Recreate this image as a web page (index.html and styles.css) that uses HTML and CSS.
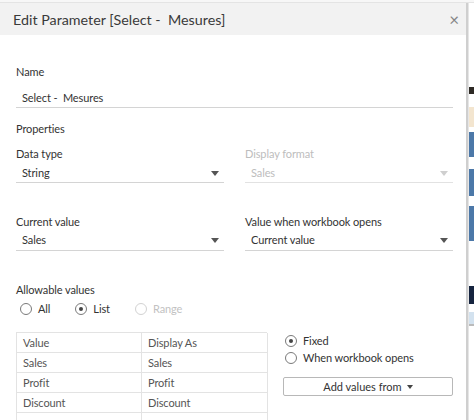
FILE: index.html
```html
<!DOCTYPE html>
<html lang="en">
<head>
  <meta charset="UTF-8">
  <title>Edit Parameter</title>
  <link rel="stylesheet" href="styles.css">
</head>
<body>
  <div class="toolbar-edge"></div>

  <div class="stage">
    <div class="dialog">
      <div class="dialog-header">
        <span class="dialog-title">Edit Parameter [Select -&nbsp; Mesures]</span>
        <span class="dialog-close">&times;</span>
      </div>

      <div class="dialog-body">
        <div class="label name-label">Name</div>
        <div class="text-field">Select -&nbsp; Mesures</div>

        <div class="label section-title">Properties</div>

        <div class="prop-grid">
          <div class="prop">
            <div class="label">Data type</div>
            <div class="dropdown">String<span class="caret"></span></div>
          </div>
          <div class="prop disabled">
            <div class="label">Display format</div>
            <div class="dropdown">Sales<span class="caret"></span></div>
          </div>
          <div class="prop second-row">
            <div class="label">Current value</div>
            <div class="dropdown">Sales<span class="caret"></span></div>
          </div>
          <div class="prop second-row">
            <div class="label">Value when workbook opens</div>
            <div class="dropdown">Current value<span class="caret"></span></div>
          </div>
        </div>

        <div class="label allowable-label">Allowable values</div>
        <div class="radio-row">
          <label class="radio"><span class="dot"></span>All</label>
          <label class="radio checked"><span class="dot"></span>List</label>
          <label class="radio disabled"><span class="dot"></span>Range</label>
        </div>

        <div class="list-area">
          <div class="value-table">
            <div class="cell">Value</div><div class="cell">Display As</div>
            <div class="cell">Sales</div><div class="cell">Sales</div>
            <div class="cell">Profit</div><div class="cell">Profit</div>
            <div class="cell">Discount</div><div class="cell">Discount</div>
            <div class="cell add-row">Click to add</div><div class="cell"></div>
          </div>

          <div class="list-options">
            <label class="radio checked"><span class="dot"></span>Fixed</label>
            <label class="radio"><span class="dot"></span>When workbook opens</label>
            <button class="add-btn">Add values from <span class="btn-caret"></span></button>
          </div>
        </div>
      </div>
    </div>

    <!-- sliver of the worksheet behind the dialog -->
    <div class="backdrop">
      <div class="bd bd-gap1"></div>
      <div class="bd bd-dark"></div>
      <div class="bd bd-gap2"></div>
      <div class="bd bd-beige"></div>
      <div class="bd bd-gap3"></div>
      <div class="bd bd-blue b1"></div>
      <div class="bd bd-gap4"></div>
      <div class="bd bd-blue b2"></div>
      <div class="bd bd-gap5"></div>
      <div class="bd bd-blue b3"></div>
      <div class="bd bd-gap6"></div>
      <div class="bd bd-navy"></div>
      <div class="bd bd-gap7"></div>
      <div class="bd bd-light"></div>
    </div>
  </div>
</body>
</html>
```

FILE: styles.css
```css
* {
  box-sizing: border-box;
  margin: 0;
  padding: 0;
}

body {
  font-family: 'Lato', 'Open Sans', sans-serif;
  background: #ffffff;
  color: #333;
  font-size: 11px;
  letter-spacing: -0.1px;
  overflow: hidden;
}

.toolbar-edge {
  height: 3px;
  background: #f7f7f7;
  border-bottom: 1px solid #e4e4e4;
}

.stage {
  display: flex;
  height: 417px;
}

/* dialog */
.dialog {
  width: 468px;
  background: #fff;
  border-right: 2px solid #cfcfcf;
  flex-shrink: 0;
}

.dialog-header {
  height: 32px;
  background: #f2f2f2;
  display: flex;
  align-items: center;
  justify-content: space-between;
  padding: 0 7px 0 13px;
}

.dialog-title {
  font-size: 14.3px;
  letter-spacing: 0;
  color: #3a3a3a;
}

.dialog-close {
  font-size: 17px;
  color: #858585;
  line-height: 1;
}

.dialog-body {
  padding: 0 13px 0 16px;
}

.label {
  line-height: 16px;
  color: #333;
}

.name-label {
  margin-top: 29px;
}

.text-field {
  margin-top: 10px;
  line-height: 16px;
  padding: 0 6px 1px;
  border-bottom: 1px solid #d4d4d4;
}

.section-title {
  margin-top: 13px;
}

.prop-grid {
  display: grid;
  grid-template-columns: 208px 208px;
  column-gap: 21px;
  margin-top: 9px;
}

.second-row {
  margin-top: 31px;
}

.dropdown {
  position: relative;
  margin-top: 3px;
  line-height: 16px;
  padding: 0 6px 1px;
  border-bottom: 1px solid #d4d4d4;
}

.second-row .dropdown {
  margin-top: 2px;
  padding-bottom: 2px;
}

.caret {
  position: absolute;
  right: 5px;
  top: 6px;
  border-left: 4px solid transparent;
  border-right: 4px solid transparent;
  border-top: 5px solid #555;
}

.prop.disabled .label,
.prop.disabled .dropdown {
  color: #bdbdbd;
}

.prop.disabled .dropdown {
  border-bottom-color: #e2e2e2;
}

.prop.disabled .caret {
  border-top-color: #cfcfcf;
}

/* radios */
.allowable-label {
  margin-top: 31px;
}

.radio-row {
  display: flex;
  gap: 25px;
  margin-top: 3px;
  padding-left: 4px;
}

.radio {
  display: flex;
  align-items: center;
  gap: 6px;
  line-height: 16px;
  color: #333;
}

.dot {
  width: 12px;
  height: 12px;
  border: 1px solid #7a7a7a;
  border-radius: 50%;
  display: flex;
  align-items: center;
  justify-content: center;
}

.radio.checked .dot::after {
  content: "";
  width: 4px;
  height: 4px;
  border-radius: 50%;
  background: #444;
}

.radio.disabled {
  color: #c2c2c2;
}

.radio.disabled .dot {
  border-color: #d2d2d2;
}

/* list of values */
.list-area {
  display: flex;
  gap: 16px;
  margin-top: 15px;
}

.value-table {
  width: 251px;
  display: grid;
  grid-template-columns: 125px 126px;
  border-top: 1px solid #e3e3e3;
  border-left: 1px solid #e3e3e3;
}

.cell {
  height: 20px;
  line-height: 19px;
  padding-left: 6px;
  color: #555;
  border-right: 1px solid #e3e3e3;
  border-bottom: 1px solid #e3e3e3;
}

.add-row {
  color: #888;
  padding-top: 4px;
}

.list-options {
  flex: 1;
  padding-left: 2px;
  padding-top: 0;
}

.list-options .radio {
  height: 17px;
}

.add-btn {
  margin-top: 11px;
  margin-left: -2px;
  width: 170px;
  height: 19px;
  background: #fff;
  border: 1px solid #b8b8b8;
  border-radius: 2px;
  font-family: inherit;
  font-size: 11px;
  color: #333;
  display: flex;
  align-items: center;
  justify-content: center;
  gap: 5px;
}

.btn-caret {
  border-left: 3px solid transparent;
  border-right: 3px solid transparent;
  border-top: 4px solid #444;
}

/* worksheet sliver */
.backdrop {
  flex: 1;
  display: flex;
  flex-direction: column;
  border-left: 1px solid #e6e6e6;
}

.bd { flex-shrink: 0; }
.bd-gap1 { height: 84px; }
.bd-dark { height: 7px; background: #2e2a25; }
.bd-gap2 { height: 13px; }
.bd-beige { height: 20px; background: #f3e5cf; }
.bd-gap3 { height: 5px; }
.bd-blue { background: #4c78a8; }
.b1 { height: 25px; }
.bd-gap4 { height: 12px; }
.b2 { height: 27px; }
.bd-gap5 { height: 10px; }
.b3 { height: 35px; }
.bd-gap6 { height: 45px; }
.bd-navy { height: 18px; background: #16243f; }
.bd-gap7 { height: 8px; }
.bd-light { height: 14px; background: #d3e2ef; border-bottom: 2px solid #bbb; }
```
